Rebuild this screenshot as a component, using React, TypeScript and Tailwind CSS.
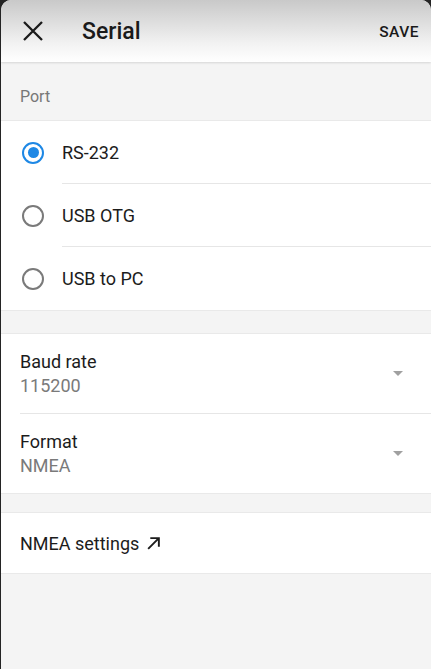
import React from "react";

const ports = ["RS-232", "USB OTG", "USB to PC"];

const Radio = ({ checked }: { checked: boolean }) =>
  checked ? (
    <span className="flex h-[22px] w-[22px] items-center justify-center rounded-full border-2 border-[#1e88e5]">
      <span className="h-[11px] w-[11px] rounded-full bg-[#1e88e5]" />
    </span>
  ) : (
    <span className="h-[22px] w-[22px] rounded-full border-2 border-[#7a7a7a]" />
  );

const Caret = () => (
  <span className="h-0 w-0 border-x-[5px] border-t-[5px] border-x-transparent border-t-[#a0a0a0]" />
);

export default function App() {
  return (
    <div
      className="relative flex min-h-[669px] w-[431px] flex-col overflow-hidden bg-[#242424]"
      style={{ fontFamily: "Roboto, 'Liberation Sans', sans-serif" }}
    >
      <div className="ml-px flex min-h-[669px] flex-col overflow-hidden rounded-t-[10px] bg-[#f4f4f4]">
        {/* Header */}
        <header className="flex h-[62px] items-center bg-gradient-to-b from-[#c9c9c9] via-[#f2f2f2] via-70% to-white pl-[20px] pr-[12px] shadow-[0_1px_2px_rgba(0,0,0,0.12)]">
          <svg width="24" height="24" viewBox="0 0 24 24">
            <path d="M3 3 L21 21 M21 3 L3 21" stroke="#1a1a1a" strokeWidth="2.3" fill="none" />
          </svg>
          <h1 className="ml-[37px] mt-[3px] text-[23px] font-medium text-[#1a1a1a]">Serial</h1>
          <button className="ml-auto mt-[3px] text-[15.5px] font-medium tracking-[0.5px] text-[#1a1a1a]">SAVE</button>
        </header>

        {/* Port label */}
        <div className="flex h-[58px] items-center px-[19px] pt-[12px] text-[16px] text-[#777]">Port</div>

        <section className="border-y border-[#e9e9e9] bg-white">
          {ports.map((p, i) => (
            <div key={p} className="flex h-[63px] items-center">
              <div className="flex w-[61px] justify-center pl-[3px]">
                <Radio checked={i === 0} />
              </div>
              <div
                className={`flex h-full flex-1 items-center text-[18px] text-[#1c1c1c] ${
                  i < ports.length - 1 ? "border-b border-[#e6e6e6]" : ""
                }`}
              >
                {p}
              </div>
            </div>
          ))}
        </section>

        <div className="h-[22px]" />

        <section className="border-y border-[#e9e9e9] bg-white">
          <div className="ml-[19px] flex h-[80px] items-center justify-between border-b border-[#e6e6e6] pr-[28px]">
            <div className="flex flex-col">
              <span className="text-[18px] leading-[24px] text-[#1c1c1c]">Baud rate</span>
              <span className="text-[18px] leading-[24px] text-[#7a7a7a]">115200</span>
            </div>
            <Caret />
          </div>
          <div className="ml-[19px] flex h-[79px] items-center justify-between pr-[28px]">
            <div className="flex flex-col">
              <span className="text-[18px] leading-[24px] text-[#1c1c1c]">Format</span>
              <span className="text-[18px] leading-[24px] text-[#7a7a7a]">NMEA</span>
            </div>
            <Caret />
          </div>
        </section>

        <div className="h-[18px]" />

        <section className="flex h-[62px] items-center border-y border-[#e9e9e9] bg-white px-[19px]">
          <span className="text-[18px] text-[#1c1c1c]">NMEA settings</span>
          <svg width="15" height="15" viewBox="0 0 14 14" className="ml-[7px] mt-[1px]">
            <path d="M2 12 L12 2 M4 2 H12 V10" stroke="#1c1c1c" strokeWidth="1.8" fill="none" />
          </svg>
        </section>
      </div>
    </div>
  );
}
